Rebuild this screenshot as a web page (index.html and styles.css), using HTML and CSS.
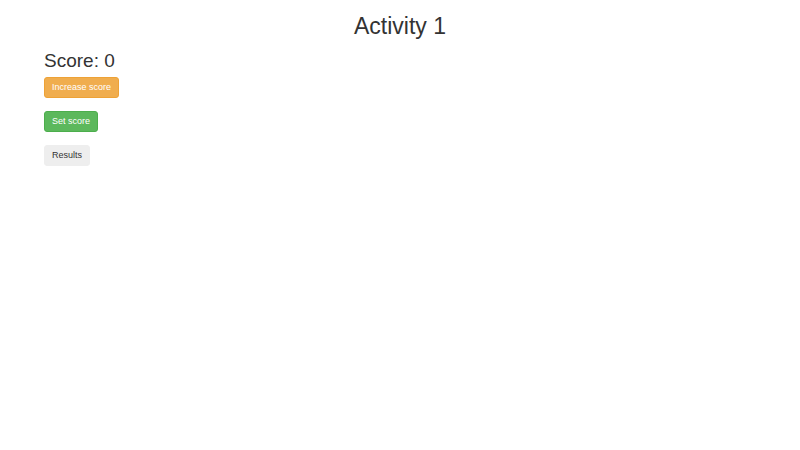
FILE: index.html
```html
<!DOCTYPE html>
<html>
<head>
<meta charset="utf-8">
<link rel="stylesheet" href="styles.css">
</head>
<body>
<h1 class="title">Activity 1</h1>
<div class="content">
  <h2 class="score">Score: 0</h2>
  <div class="actions">
    <button class="btn btn-warning">Increase score</button>
    <button class="btn btn-success">Set score</button>
    <button class="btn btn-default">Results</button>
  </div>
</div>
</body>
</html>
```
FILE: styles.css
```css
html, body {
  margin: 0;
  padding: 0;
  background: #fff;
  font-family: "Liberation Sans", Arial, sans-serif;
  color: #333;
}
.title {
  margin: 0;
  padding-top: 12px;
  text-align: center;
  font-size: 23px;
  font-weight: 400;
  line-height: 28px;
}
.content {
  padding: 0 44px;
}
.score {
  margin: 10px 0 5px;
  font-size: 19px;
  font-weight: 400;
  line-height: 22px;
}
.actions {
  display: flex;
  flex-direction: column;
  align-items: flex-start;
  gap: 13px;
}
.btn {
  font-family: "Liberation Sans", Arial, sans-serif;
  font-size: 9px;
  line-height: 11px;
  padding: 4px 7px;
  border: 1px solid transparent;
  border-radius: 3px;
  cursor: pointer;
}
.btn-warning {
  background: #f0ad4e;
  border-color: #eea236;
  color: #fff;
}
.btn-success {
  background: #5cb85c;
  border-color: #4cae4c;
  color: #fff;
}
.btn-default {
  background: #eeeeee;
  border-color: #eeeeee;
  color: #333;
}
```
